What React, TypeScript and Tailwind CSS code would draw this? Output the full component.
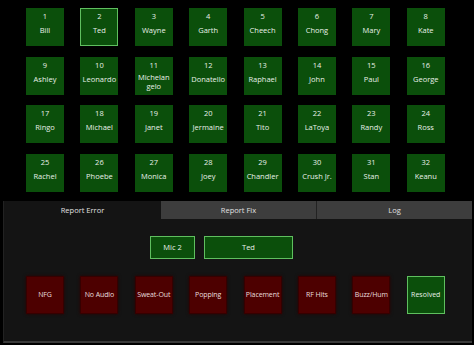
import React from "react";

const names = [
  "Bill","Ted","Wayne","Garth","Cheech","Chong","Mary","Kate",
  "Ashley","Leonardo","Michelangelo","Donatello","Raphael","John","Paul","George",
  "Ringo","Michael","Janet","Jermaine","Tito","LaToya","Randy","Ross",
  "Rachel","Phoebe","Monica","Joey","Chandler","Crush Jr.","Stan","Keanu",
];

const errors = ["NFG","No Audio","Sweat-Out","Popping","Placement","RF Hits","Buzz/Hum"];

export default function App() {
  return (
    <div
      className="w-[474px] h-[345px] bg-black text-[#e8f0e8] overflow-hidden flex flex-col"
      style={{ fontFamily: '"Open Sans", "Liberation Sans", sans-serif' }}
    >
      <div className="grid grid-cols-[repeat(8,38px)] gap-x-[16.4px] gap-y-[10.7px] pl-[26px] pt-[8px]">
        {names.map((n, i) => (
          <div
            key={n}
            className={
              "h-[38px] flex flex-col items-center pt-[3px] text-[7.5px] leading-[10px] text-center " +
              (i === 1
                ? "bg-[#0b4f0b] border border-[#5fbf5f]"
                : "bg-[#0b4f0b]")
            }
          >
            <div className={i === 1 ? "mt-[-1px]" : ""}>{i + 1}</div>
            {i === 10 ? (
              <div className="mt-[3px] leading-[9px] whitespace-nowrap">
                Michelan
                <br />
                gelo
              </div>
            ) : (
              <div className="mt-[4px] whitespace-nowrap">{n}</div>
            )}
          </div>
        ))}
      </div>

      <div className="mt-[9px] ml-[3px] w-[469px] h-[142px] bg-[#141414] border-l border-[#222] border-b-2 border-b-[#3a3a3a] flex flex-col">
        <div className="flex h-[18px] text-[7.5px] leading-[18px] text-center">
          <div className="w-[157px] bg-[#141414] text-[#e0e0e0]">Report Error</div>
          <div className="w-[156px] bg-[#3d3d3d] text-[#e0e0e0] border-r border-[#222]">Report Fix</div>
          <div className="flex-1 bg-[#3d3d3d] text-[#e0e0e0]">Log</div>
        </div>
        <div className="flex gap-[9px] pl-[146px] mt-[17px]">
          <div className="w-[45px] h-[23px] bg-[#0b4f0b] border border-[#5fbf5f] text-[7.5px] flex items-center justify-center">
            Mic 2
          </div>
          <div className="w-[89px] h-[23px] bg-[#0b4f0b] border border-[#5fbf5f] text-[7.5px] flex items-center justify-center">
            Ted
          </div>
        </div>
        <div className="grid grid-cols-[repeat(8,38px)] gap-x-[16.4px] pl-[22px] mt-[17px]">
          {errors.map((e) => (
            <div
              key={e}
              className="h-[38px] bg-[#4d0000] border border-[#350000] shadow-[0_0_3px_#2a0000] text-[7px] tracking-[-0.1px] whitespace-nowrap flex items-center justify-center text-[#e8dede]"
            >
              {e}
            </div>
          ))}
          <div className="h-[38px] bg-[#0b4f0b] border border-[#5fbf5f] text-[7px] flex items-center justify-center">
            Resolved
          </div>
        </div>
      </div>
    </div>
  );
}
